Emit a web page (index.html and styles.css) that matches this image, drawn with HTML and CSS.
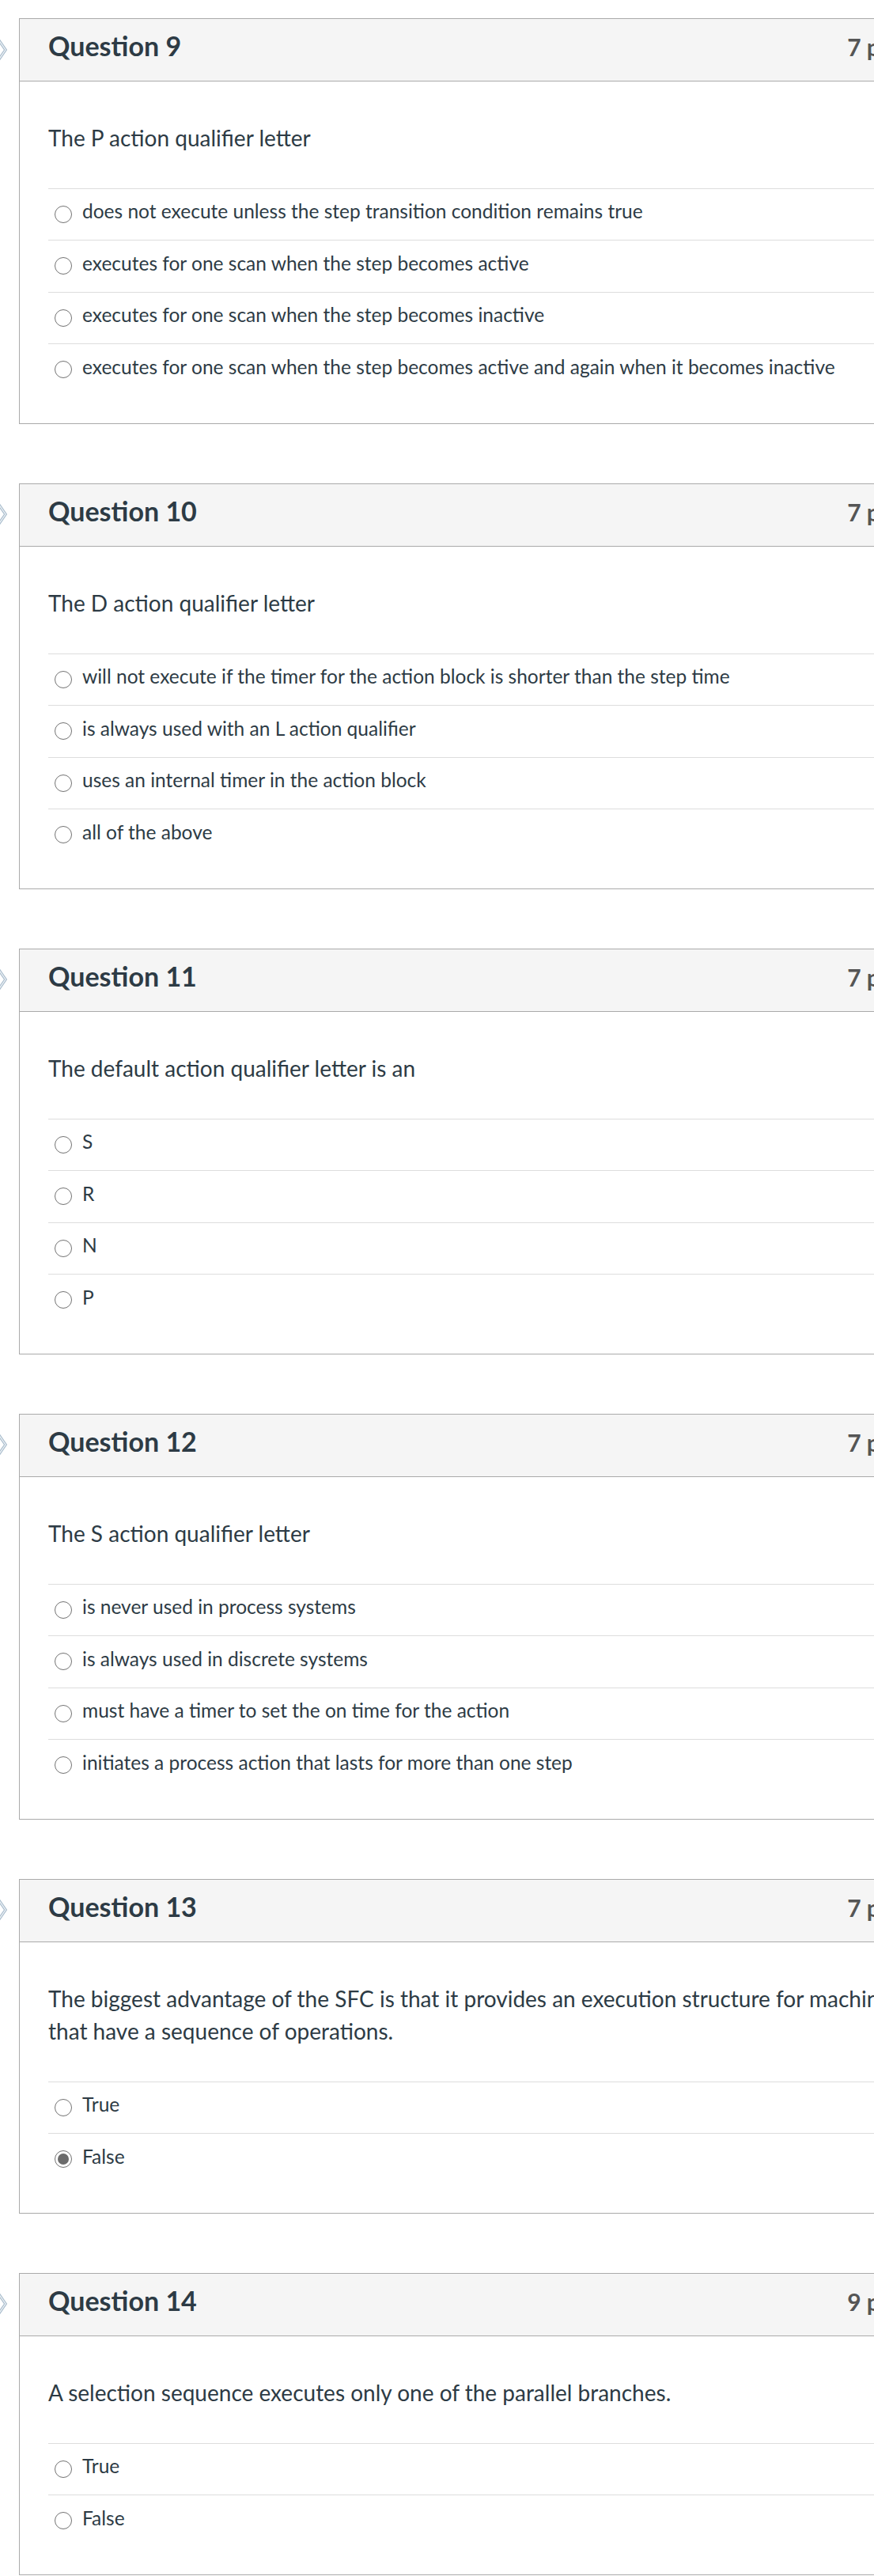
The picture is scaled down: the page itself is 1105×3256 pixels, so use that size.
FILE: index.html
```html
<!DOCTYPE html>
<html lang="en">
<head>
<meta charset="utf-8">
<title>Quiz</title>
<link rel="stylesheet" href="styles.css">
</head>
<body>
<div class="quiz">

  <div class="q-row">
    <div class="flag"><svg width="24" height="30" viewBox="0 0 24 30"><path d="M-2,2 L7,15 L-2,28" class="flag-out"/><path d="M-2,2 L7,15 L-2,28" class="flag-in"/></svg></div>
    <div class="question">
      <div class="q-header"><h2 class="q-name">Question 9</h2><span class="q-points">7 pts</span></div>
      <div class="q-body">
        <div class="q-text">The P action qualifier letter</div>
        <div class="answers">
          <div class="answer"><span class="radio"></span><span class="label">does not execute unless the step transition condition remains true</span></div>
          <div class="answer"><span class="radio"></span><span class="label">executes for one scan when the step becomes active</span></div>
          <div class="answer"><span class="radio"></span><span class="label">executes for one scan when the step becomes inactive</span></div>
          <div class="answer"><span class="radio"></span><span class="label">executes for one scan when the step becomes active and again when it becomes inactive</span></div>
        </div>
      </div>
    </div>
  </div>

  <div class="q-row">
    <div class="flag"><svg width="24" height="30" viewBox="0 0 24 30"><path d="M-2,2 L7,15 L-2,28" class="flag-out"/><path d="M-2,2 L7,15 L-2,28" class="flag-in"/></svg></div>
    <div class="question">
      <div class="q-header"><h2 class="q-name">Question 10</h2><span class="q-points">7 pts</span></div>
      <div class="q-body">
        <div class="q-text">The D action qualifier letter</div>
        <div class="answers">
          <div class="answer"><span class="radio"></span><span class="label">will not execute if the timer for the action block is shorter than the step time</span></div>
          <div class="answer"><span class="radio"></span><span class="label">is always used with an L action qualifier</span></div>
          <div class="answer"><span class="radio"></span><span class="label">uses an internal timer in the action block</span></div>
          <div class="answer"><span class="radio"></span><span class="label">all of the above</span></div>
        </div>
      </div>
    </div>
  </div>

  <div class="q-row">
    <div class="flag"><svg width="24" height="30" viewBox="0 0 24 30"><path d="M-2,2 L7,15 L-2,28" class="flag-out"/><path d="M-2,2 L7,15 L-2,28" class="flag-in"/></svg></div>
    <div class="question">
      <div class="q-header"><h2 class="q-name">Question 11</h2><span class="q-points">7 pts</span></div>
      <div class="q-body">
        <div class="q-text">The default action qualifier letter is an</div>
        <div class="answers">
          <div class="answer"><span class="radio"></span><span class="label">S</span></div>
          <div class="answer"><span class="radio"></span><span class="label">R</span></div>
          <div class="answer"><span class="radio"></span><span class="label">N</span></div>
          <div class="answer"><span class="radio"></span><span class="label">P</span></div>
        </div>
      </div>
    </div>
  </div>

  <div class="q-row">
    <div class="flag"><svg width="24" height="30" viewBox="0 0 24 30"><path d="M-2,2 L7,15 L-2,28" class="flag-out"/><path d="M-2,2 L7,15 L-2,28" class="flag-in"/></svg></div>
    <div class="question">
      <div class="q-header"><h2 class="q-name">Question 12</h2><span class="q-points">7 pts</span></div>
      <div class="q-body">
        <div class="q-text">The S action qualifier letter</div>
        <div class="answers">
          <div class="answer"><span class="radio"></span><span class="label">is never used in process systems</span></div>
          <div class="answer"><span class="radio"></span><span class="label">is always used in discrete systems</span></div>
          <div class="answer"><span class="radio"></span><span class="label">must have a timer to set the on time for the action</span></div>
          <div class="answer"><span class="radio"></span><span class="label">initiates a process action that lasts for more than one step</span></div>
        </div>
      </div>
    </div>
  </div>

  <div class="q-row">
    <div class="flag"><svg width="24" height="30" viewBox="0 0 24 30"><path d="M-2,2 L7,15 L-2,28" class="flag-out"/><path d="M-2,2 L7,15 L-2,28" class="flag-in"/></svg></div>
    <div class="question">
      <div class="q-header"><h2 class="q-name">Question 13</h2><span class="q-points">7 pts</span></div>
      <div class="q-body">
        <div class="q-text">The biggest advantage of the SFC is that it provides an execution structure for machines that have a sequence of operations.</div>
        <div class="answers">
          <div class="answer"><span class="radio"></span><span class="label">True</span></div>
          <div class="answer"><span class="radio checked"></span><span class="label">False</span></div>
        </div>
      </div>
    </div>
  </div>

  <div class="q-row">
    <div class="flag"><svg width="24" height="30" viewBox="0 0 24 30"><path d="M-2,2 L7,15 L-2,28" class="flag-out"/><path d="M-2,2 L7,15 L-2,28" class="flag-in"/></svg></div>
    <div class="question">
      <div class="q-header"><h2 class="q-name">Question 14</h2><span class="q-points">9 pts</span></div>
      <div class="q-body">
        <div class="q-text">A selection sequence executes only one of the parallel branches.</div>
        <div class="answers">
          <div class="answer"><span class="radio"></span><span class="label">True</span></div>
          <div class="answer"><span class="radio"></span><span class="label">False</span></div>
        </div>
      </div>
    </div>
  </div>

</div>
</body>
</html>
```

FILE: styles.css
```css
html, body {
  margin: 0;
  padding: 0;
  background: #ffffff;
  overflow-x: hidden;
}

body {
  font-family: Lato, "Open Sans", "Liberation Sans", sans-serif;
  color: #2d3b45;
}

.quiz {
  padding-top: 23px;
  width: 1218px;
}

.q-row {
  display: flex;
  align-items: flex-start;
  margin-bottom: 75px;
}

.flag {
  flex: none;
  width: 24px;
  height: 79px;
  display: flex;
  align-items: center;
}

.flag svg {
  display: block;
  overflow: visible;
}

.flag-out {
  fill: none;
  stroke: #a9bccc;
  stroke-width: 3.5;
}

.flag-in {
  fill: none;
  stroke: #eef3f7;
  stroke-width: 1.2;
}

.question {
  flex: none;
  width: 1194px;
  box-sizing: border-box;
  border: 1px solid #aaaaaa;
  background: #ffffff;
}

.q-header {
  box-sizing: border-box;
  height: 79px;
  display: flex;
  align-items: baseline;
  justify-content: space-between;
  padding: 14px 80px 0 36px;
  background: #f5f5f5;
  border-bottom: 1px solid #aaaaaa;
}

.q-name {
  margin: 0;
  font-size: 34px;
  line-height: 1.2;
  font-weight: 700;
  color: #2d3b45;
}

.q-points {
  font-size: 30px;
  line-height: 1.2;
  font-weight: 700;
  color: #555555;
}

.q-body {
  padding: 51px 56px 35px 36px;
}

.q-text {
  font-size: 28px;
  line-height: 1.45;
  margin-bottom: 43.4px;
}

.answers {
  display: flex;
  flex-direction: column;
}

.answer {
  box-sizing: border-box;
  height: 65.5px;
  border-top: 1px solid #dddddd;
  display: flex;
  align-items: flex-start;
  padding-top: 10.5px;
}

.radio {
  flex: none;
  box-sizing: border-box;
  width: 22px;
  height: 22px;
  margin: 10.5px 13px 0 8px;
  border: 1.8px solid #737373;
  border-radius: 50%;
  background: #ffffff;
  display: flex;
  align-items: center;
  justify-content: center;
}

.radio.checked::after {
  content: "";
  width: 14px;
  height: 14px;
  border-radius: 50%;
  background: #6b6b6b;
}

.label {
  font-size: 24.5px;
  line-height: 1.5;
}
```
